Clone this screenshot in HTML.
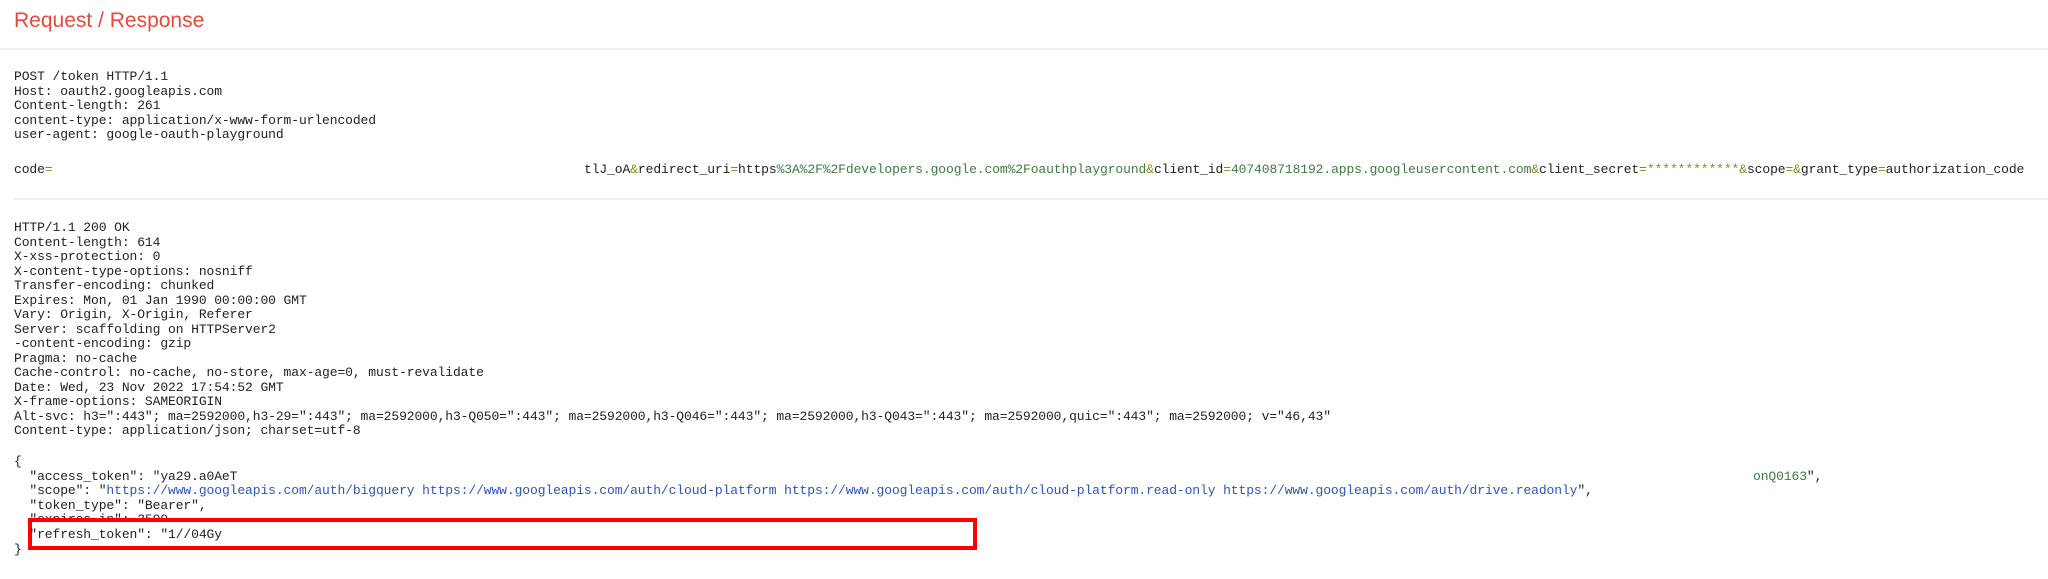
<!DOCTYPE html>
<html><head><meta charset="utf-8"><style>
html,body{margin:0;padding:0;background:#fff;width:2048px;height:579px;overflow:hidden;position:relative}
.t{position:absolute;left:14px;top:9px;font:21px "Liberation Sans",Arial,sans-serif;color:#e8493c}
.sep{position:absolute;height:2px;background:#efefef}
pre{position:absolute;margin:0;font:13px/14.5px "Liberation Mono",monospace;color:#222;letter-spacing:-0.1px;white-space:pre}
.o{color:#8a8a1a}.g{color:#3f7a3f}.b{color:#2b57b8}
.box{position:absolute;left:28px;top:518px;width:941px;height:24px;border:4px solid #f00;background:#fff}
</style></head><body>
<div class="t">Request / Response</div>
<div class="sep" style="left:0;top:48px;width:2048px"></div>
<pre style="left:14px;top:70px">POST /token HTTP/1.1
Host: oauth2.googleapis.com
Content-length: 261
content-type: application/x-www-form-urlencoded
user-agent: google-oauth-playground</pre>
<pre style="left:14px;top:163px">code<span class="o">=</span></pre>
<pre style="left:584px;top:163px">tlJ_oA<span class="o">&amp;</span>redirect_uri<span class="o">=</span>https<span class="g">%3A%2F%2Fdevelopers.google.com%2Foauthplayground</span><span class="o">&amp;</span>client_id<span class="o">=</span><span class="g">407408718192.apps.googleusercontent.com</span><span class="o">&amp;</span>client_secret<span class="o">=************&amp;</span>scope<span class="o">=&amp;</span>grant_type<span class="o">=</span>authorization_code</pre>
<div class="sep" style="left:14px;top:198px;width:2034px"></div>
<pre style="left:14px;top:221px">HTTP/1.1 200 OK
Content-length: 614
X-xss-protection: 0
X-content-type-options: nosniff
Transfer-encoding: chunked
Expires: Mon, 01 Jan 1990 00:00:00 GMT
Vary: Origin, X-Origin, Referer
Server: scaffolding on HTTPServer2
-content-encoding: gzip
Pragma: no-cache
Cache-control: no-cache, no-store, max-age=0, must-revalidate
Date: Wed, 23 Nov 2022 17:54:52 GMT
X-frame-options: SAMEORIGIN
Alt-svc: h3=":443"; ma=2592000,h3-29=":443"; ma=2592000,h3-Q050=":443"; ma=2592000,h3-Q046=":443"; ma=2592000,h3-Q043=":443"; ma=2592000,quic=":443"; ma=2592000; v="46,43"
Content-type: application/json; charset=utf-8</pre>
<pre style="left:14px;top:455px">{
  "access_token": "ya29.a0AeT
  "scope": "<span class="b">https://www.googleapis.com/auth/bigquery https://www.googleapis.com/auth/cloud-platform https://www.googleapis.com/auth/cloud-platform.read-only https://www.googleapis.com/auth/drive.readonly</span>",
  "token_type": "Bearer",
  "expires_in": 3599,</pre>
<pre style="left:1753px;top:469.5px"><span class="g">onQ0163</span>",</pre>
<div class="box"></div>
<pre style="left:14px;top:528px">  "refresh_token": "1//04Gy
}</pre>
</body></html>
